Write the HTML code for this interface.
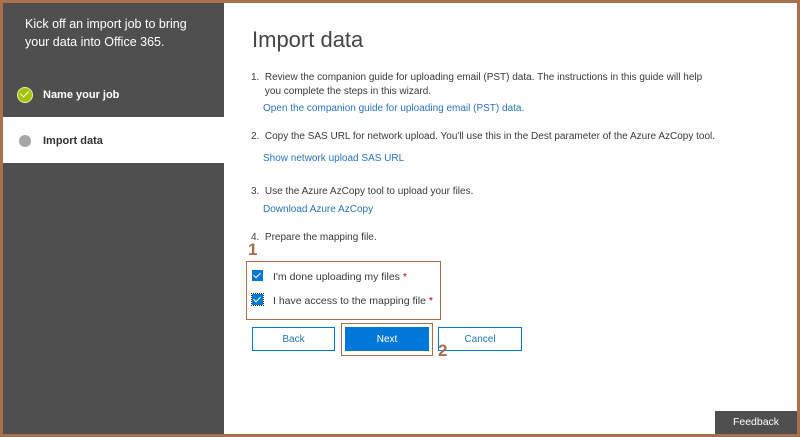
<!DOCTYPE html>
<html><head><style>
*{margin:0;padding:0;box-sizing:border-box}
body{width:800px;height:437px;background:#a8704f;position:relative;overflow:hidden;font-family:"Liberation Sans",sans-serif}
.abs{position:absolute;white-space:nowrap}
#main{position:absolute;left:3px;top:3px;width:794px;height:431px;background:#fff}
#side{position:absolute;left:3px;top:3px;width:221px;height:431px;background:#4f4f4f}
.t{font-size:10px;color:#3a3a3a}
.l{font-size:10px;color:#2a74c0}
.btn{position:absolute;height:24px;font-size:10px;text-align:center;line-height:24px;border:1px solid #0078d7;color:#2a74c0;background:#fff}
.cb{position:absolute;width:11px;height:11px;background:#0078d7}
.cb::after{content:"";position:absolute;left:3px;top:1px;width:3px;height:6px;border:solid #fff;border-width:0 1px 1px 0;transform:rotate(45deg)}
</style></head><body>
<div id="main"></div>
<div id="side"></div>
<div class="abs" style="left:25px;top:15px;color:#fff;font-size:12.5px;line-height:18px">Kick off an import job to bring<br>your data into Office 365.</div>
<div class="abs" style="left:17px;top:87px;width:16px;height:16px;border-radius:50%;background:#a4c400;border:1px solid #e8f0b0"></div>
<div class="abs" style="left:22px;top:89px;width:5px;height:8px;border:solid #fff;border-width:0 1.5px 1.5px 0;transform:rotate(45deg)"></div>
<div class="abs" style="left:43px;top:89px;color:#fff;font-size:11px;font-weight:bold">Name your job</div>
<div class="abs" style="left:3px;top:117px;width:221px;height:46px;background:#fff"></div>
<div class="abs" style="left:19px;top:135px;width:12px;height:12px;border-radius:50%;background:#a6a6a6"></div>
<div class="abs" style="left:43px;top:135px;color:#333;font-size:11px;font-weight:bold">Import data</div>

<div class="abs" style="left:252px;top:27px;font-size:22px;color:#444">Import data</div>
<div class="abs t" style="left:251px;top:71px;line-height:14px">1.&nbsp; Review the companion guide for uploading email (PST) data. The instructions in this guide will help<br>&nbsp;&nbsp;&nbsp;&nbsp; you complete the steps in this wizard.</div>
<div class="abs l" style="left:263px;top:103px">Open the companion guide for uploading email (PST) data.</div>
<div class="abs t" style="left:251px;top:131px">2.&nbsp; Copy the SAS URL for network upload. You'll use this in the Dest parameter of the Azure AzCopy tool.</div>
<div class="abs l" style="left:263px;top:153px">Show network upload SAS URL</div>
<div class="abs t" style="left:251px;top:186px">3.&nbsp; Use the Azure AzCopy tool to upload your files.</div>
<div class="abs l" style="left:263px;top:204px">Download Azure AzCopy</div>
<div class="abs t" style="left:251px;top:232px">4.&nbsp; Prepare the mapping file.</div>
<div class="abs" style="left:248px;top:240px;font-size:17px;font-weight:bold;color:#a8704f">1</div>
<div class="abs" style="left:246px;top:261px;width:195px;height:59px;border:1px solid #a8704f"></div>
<div class="cb" style="left:252px;top:270px"></div>
<div class="abs t" style="left:273px;top:271px;font-size:10.5px">I'm done uploading my files <span style="color:#a80000">*</span></div>
<div class="cb" style="left:252px;top:294px;outline:1px dotted #333"></div>
<div class="abs t" style="left:273px;top:295px;font-size:10.5px">I have access to the mapping file <span style="color:#a80000">*</span></div>
<div class="btn" style="left:252px;top:327px;width:83px">Back</div>
<div class="abs" style="left:341px;top:323px;width:92px;height:33px;border:1px solid #a8704f"></div>
<div class="btn" style="left:345px;top:327px;width:84px;background:#0078d7;color:#fff;border-color:#0078d7">Next</div>
<div class="btn" style="left:438px;top:327px;width:84px">Cancel</div>
<div class="abs" style="left:438px;top:341px;font-size:17px;font-weight:bold;color:#a8704f">2</div>
<div class="abs" style="left:715px;top:411px;width:82px;height:23px;background:#4f4f4f;color:#fff;font-size:10.5px;text-align:center;line-height:23px">Feedback</div>
</body></html>
